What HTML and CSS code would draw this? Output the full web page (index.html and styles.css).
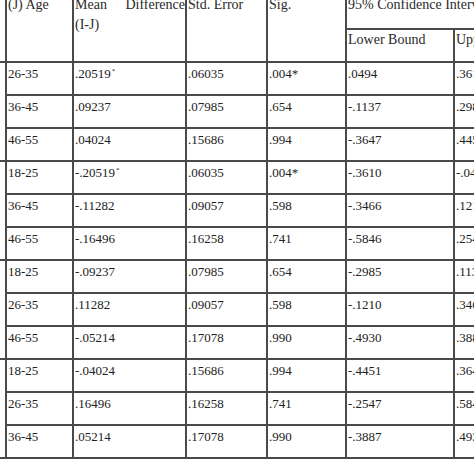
FILE: index.html
```html
<!DOCTYPE html>
<html lang="en">
<head>
<meta charset="utf-8">
<title>Multiple Comparisons - Age</title>
<link rel="stylesheet" href="styles.css">
</head>
<body>
<table class="anova">
  <colgroup>
    <col class="c-i"><col class="c-j"><col class="c-mean"><col class="c-se"><col class="c-sig"><col class="c-lo"><col class="c-up">
  </colgroup>
  <thead>
    <tr class="h1">
      <th rowspan="2">(I) Age</th>
      <th rowspan="2">(J) Age</th>
      <th rowspan="2" class="just">Mean Difference (I-J)</th>
      <th rowspan="2">Std. Error</th>
      <th rowspan="2">Sig.</th>
      <th colspan="2">95% Confidence Interval</th>
    </tr>
    <tr class="h2">
      <th>Lower Bound</th>
      <th>Upper Bound</th>
    </tr>
  </thead>
  <tbody>
    <tr><td rowspan="3">18-25</td><td>26-35</td><td>.20519<sup class="star">*</sup></td><td>.06035</td><td>.004*</td><td>.0494</td><td>.3610</td></tr>
    <tr><td>36-45</td><td>.09237</td><td>.07985</td><td>.654</td><td>-.1137</td><td>.2984</td></tr>
    <tr><td>46-55</td><td>.04024</td><td>.15686</td><td>.994</td><td>-.3647</td><td>.4451</td></tr>
    <tr><td rowspan="3">26-35</td><td>18-25</td><td>-.20519<sup class="star">*</sup></td><td>.06035</td><td>.004*</td><td>-.3610</td><td>-.0494</td></tr>
    <tr><td>36-45</td><td>-.11282</td><td>.09057</td><td>.598</td><td>-.3466</td><td>.1210</td></tr>
    <tr><td>46-55</td><td>-.16496</td><td>.16258</td><td>.741</td><td>-.5846</td><td>.2547</td></tr>
    <tr><td rowspan="3">36-45</td><td>18-25</td><td>-.09237</td><td>.07985</td><td>.654</td><td>-.2985</td><td>.1137</td></tr>
    <tr><td>26-35</td><td>.11282</td><td>.09057</td><td>.598</td><td>-.1210</td><td>.3466</td></tr>
    <tr><td>46-55</td><td>-.05214</td><td>.17078</td><td>.990</td><td>-.4930</td><td>.3887</td></tr>
    <tr><td rowspan="3">46-55</td><td>18-25</td><td>-.04024</td><td>.15686</td><td>.994</td><td>-.4451</td><td>.3647</td></tr>
    <tr><td>26-35</td><td>.16496</td><td>.16258</td><td>.741</td><td>-.2547</td><td>.5846</td></tr>
    <tr><td>36-45</td><td>.05214</td><td>.17078</td><td>.990</td><td>-.3887</td><td>.4930</td></tr>
  </tbody>
</table>
</body>
</html>
```

FILE: styles.css
```css
html, body {
  margin: 0;
  padding: 0;
  overflow: hidden;
  background: #ffffff;
}

.anova {
  border-collapse: collapse;
  table-layout: fixed;
  width: 613px;
  margin: -7px 0 0 -60px;
  font-family: "Liberation Serif", "Times New Roman", serif;
  color: #222222;
}

.c-i { width: 65px; }
.c-j { width: 67px; }
.c-mean { width: 113px; }
.c-se { width: 81px; }
.c-sig { width: 79px; }
.c-lo { width: 108px; }
.c-up { width: 100px; }

.anova th,
.anova td {
  border: 2px solid #4a4a4a;
  padding: 0 0 0 1px;
  vertical-align: top;
  text-align: left;
  font-weight: normal;
  white-space: nowrap;
}

.anova th {
  font-size: 14px;
  line-height: 20px;
  color: #2a2a2a;
}

.anova .just {
  white-space: normal;
  text-align: justify;
  padding-right: 0;
}

.anova tr { height: 33px; }
.anova tr.h1 { height: 35px; }

.anova td {
  font-size: 13px;
  line-height: 15px;
  padding-top: 3px;
}

.star {
  font-size: 7px;
  vertical-align: top;
  line-height: 10px;
  margin-left: 1px;
}
```
